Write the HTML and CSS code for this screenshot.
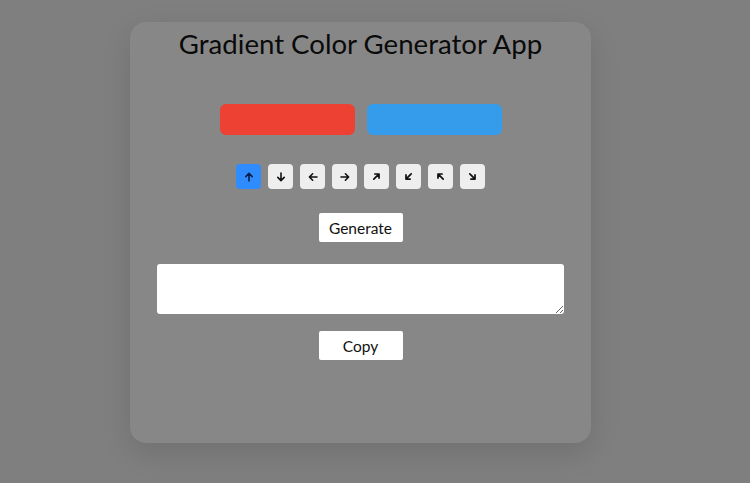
FILE: index.html
```html
<!DOCTYPE html>
<html>
<head>
<meta charset="utf-8">
<link rel="stylesheet" href="styles.css">
</head>
<body>
<div class="card">
  <h1 class="title">Gradient Color Generator App</h1>
  <div class="swatches">
    <div class="swatch red"></div>
    <div class="swatch blue"></div>
  </div>
  <div class="dirs">
    <button class="dir active"><svg viewBox="0 0 10 10"><path d="M5 9V1.5M1.8 4.6L5 1.4L8.2 4.6"/></svg></button>
    <button class="dir"><svg viewBox="0 0 10 10"><path d="M5 1v7.5M1.8 5.4L5 8.6L8.2 5.4"/></svg></button>
    <button class="dir"><svg viewBox="0 0 10 10"><path d="M9 5H1.5M4.6 1.8L1.4 5L4.6 8.2"/></svg></button>
    <button class="dir"><svg viewBox="0 0 10 10"><path d="M1 5h7.5M5.4 1.8L8.6 5L5.4 8.2"/></svg></button>
    <button class="dir"><svg class="diag" viewBox="0 0 10 10"><path d="M2 8L7.6 2.4M3.2 2.2H7.8V6.8"/></svg></button>
    <button class="dir"><svg class="diag" viewBox="0 0 10 10"><path d="M8 2L2.4 7.6M2.2 3.2V7.8H6.8"/></svg></button>
    <button class="dir"><svg class="diag" viewBox="0 0 10 10"><path d="M8 8L2.4 2.4M2.2 6.8V2.2H6.8"/></svg></button>
    <button class="dir"><svg class="diag" viewBox="0 0 10 10"><path d="M2 2L7.6 7.6M3.2 7.8H7.8V3.2"/></svg></button>
  </div>
  <button class="action gen">Generate</button>
  <textarea class="output"></textarea>
  <button class="action copy">Copy</button>
</div>
</body>
</html>
```
FILE: styles.css
```css
html, body {
  margin: 0;
  padding: 0;
}
body {
  background: #7f7f7f;
  height: 483px;
  overflow: hidden;
  font-family: "Lato", "Roboto", sans-serif;
}
.card {
  width: 461px;
  height: 421px;
  margin: 22px 0 0 130px;
  background: #878787;
  border-radius: 16px;
  box-shadow: 0 10px 30px rgba(0, 0, 0, 0.12);
  display: flex;
  flex-direction: column;
  align-items: center;
  box-sizing: border-box;
  padding-top: 4px;
}
.title {
  margin: 0;
  font-size: 27.6px;
  line-height: 35px;
  font-weight: 400;
  color: #0a0a0a;
}
.swatches {
  display: flex;
  gap: 12px;
  margin-top: 43px;
}
.swatch {
  width: 135px;
  height: 31px;
  border-radius: 6px;
}
.red { background: #ed4134; }
.blue { background: #349ceb; }
.dirs {
  display: flex;
  gap: 7px;
  margin-top: 29px;
}
.dir {
  width: 25px;
  height: 25px;
  border: none;
  border-radius: 4px;
  background: #eeeeee;
  padding: 0;
  display: flex;
  align-items: center;
  justify-content: center;
}
.dir svg {
  width: 10px;
  height: 10px;
  fill: none;
  stroke: #111;
  stroke-width: 1.6;
  stroke-linecap: round;
  stroke-linejoin: round;
}
.dir svg.diag {
  width: 9px;
  height: 9px;
  stroke-width: 1.9;
}
.dir.active {
  background: #2e8cff;
}
.dir.active svg {
  stroke: #0b1e4a;
}
.action {
  width: 84px;
  height: 29px;
  background: #ffffff;
  border: none;
  border-radius: 2px;
  font-family: "Lato", "Roboto", sans-serif;
  font-size: 15.5px;
  color: #111;
  padding: 0;
}
.gen {
  margin-top: 24px;
}
.output {
  width: 407px;
  height: 50px;
  margin-top: 22px;
  border: none;
  border-radius: 3px;
  background: #fff;
  box-sizing: border-box;
  display: block;
}
.copy {
  margin-top: 17px;
  font-size: 15.5px;
}
```
